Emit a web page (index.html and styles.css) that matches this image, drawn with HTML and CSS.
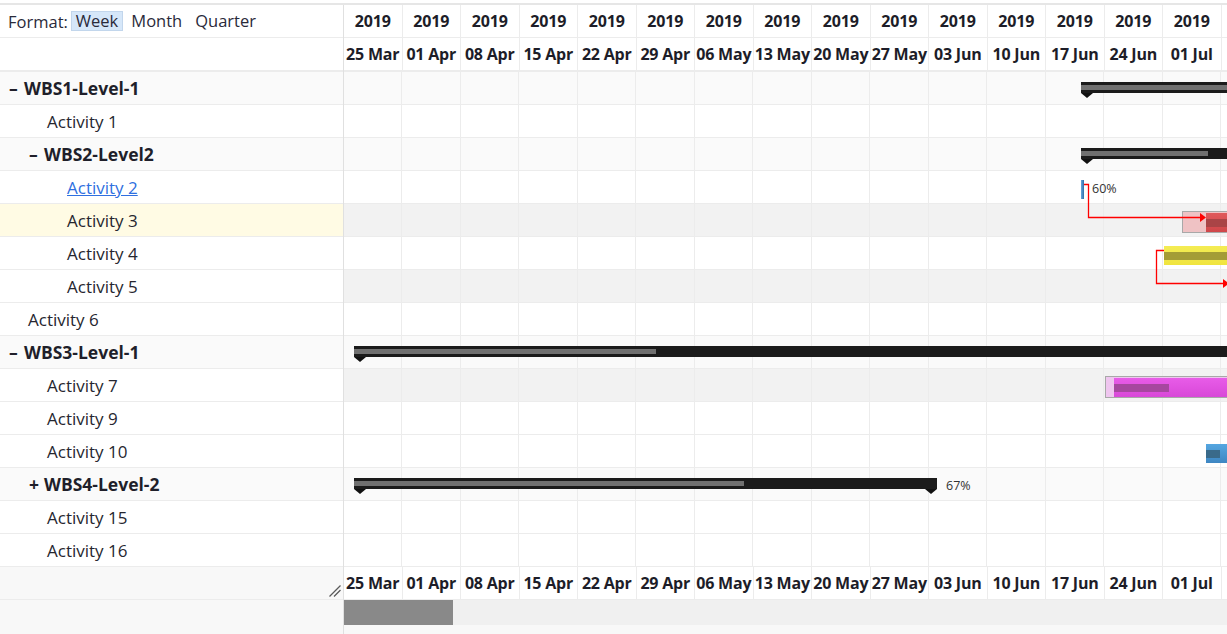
FILE: index.html
```html
<!DOCTYPE html>
<html>
<head>
<meta charset="utf-8">
<link rel="stylesheet" href="styles.css">
</head>
<body>
<div class="gantt">
  <div class="grid">
    <div class="hrow1"><span class="lbl">Format:</span><span class="fmt on">Week</span><span class="fmt">Month</span><span class="fmt">Quarter</span></div>
    <div class="hrow2"></div>
    <div class="row sum p9"><b><span class="tog">–</span>WBS1-Level-1</b></div>
    <div class="row p47">Activity 1</div>
    <div class="row sum p29"><b><span class="tog">–</span>WBS2-Level2</b></div>
    <div class="row p67"><a class="link" href="#">Activity 2</a></div>
    <div class="row sel p67">Activity 3</div>
    <div class="row p67">Activity 4</div>
    <div class="row p67">Activity 5</div>
    <div class="row p28">Activity 6</div>
    <div class="row sum p9"><b><span class="tog">–</span>WBS3-Level-1</b></div>
    <div class="row p47">Activity 7</div>
    <div class="row p47">Activity 9</div>
    <div class="row p47">Activity 10</div>
    <div class="row sum p29"><b><span class="tog">+</span>WBS4-Level-2</b></div>
    <div class="row p47">Activity 15</div>
    <div class="row p47">Activity 16</div>
    <div class="frow">
      <svg class="grip" width="14" height="14" viewBox="0 0 14 14"><path d="M1.5 12.5 L12.5 1.5 M6 12.5 L12.5 6" stroke="#5a5a5a" stroke-width="1.3" fill="none"/></svg>
    </div>
    <div class="srow"></div>
  </div>
  <div class="chart">
    <div class="hrow1 cells">
      <div class="cell">2019</div><div class="cell">2019</div><div class="cell">2019</div><div class="cell">2019</div><div class="cell">2019</div><div class="cell">2019</div><div class="cell">2019</div><div class="cell">2019</div><div class="cell">2019</div><div class="cell">2019</div><div class="cell">2019</div><div class="cell">2019</div><div class="cell">2019</div><div class="cell">2019</div><div class="cell">2019</div><div class="cell"></div>
    </div>
    <div class="hrow2 cells">
      <div class="cell">25 Mar</div><div class="cell">01 Apr</div><div class="cell">08 Apr</div><div class="cell">15 Apr</div><div class="cell">22 Apr</div><div class="cell">29 Apr</div><div class="cell">06 May</div><div class="cell">13 May</div><div class="cell">20 May</div><div class="cell">27 May</div><div class="cell">03 Jun</div><div class="cell">10 Jun</div><div class="cell">17 Jun</div><div class="cell">24 Jun</div><div class="cell">01 Jul</div><div class="cell"></div>
    </div>
    <div class="body">
      <div class="vlines"></div>
      <div class="row sum">
        <div class="sbar" style="left:737px;width:400px"><div class="sprog" style="width:400px"></div><span class="tri l"></span></div>
      </div>
      <div class="row"></div>
      <div class="row sum">
        <div class="sbar" style="left:737px;width:400px"><div class="sprog" style="width:127px"></div><span class="tri l"></span></div>
      </div>
      <div class="row">
        <div class="mark" style="left:737px"></div><span class="pct" style="left:748px">60%</span>
      </div>
      <div class="row grey">
        <div class="box red" style="left:838px"></div>
        <div class="bar red" style="left:862px"><div class="strip" style="width:60px"></div></div>
      </div>
      <div class="row">
        <div class="bar yellow" style="left:820px"><div class="strip" style="width:60px"></div></div>
      </div>
      <div class="row grey"></div>
      <div class="row"></div>
      <div class="row sum">
        <div class="sbar" style="left:10px;width:1000px"><div class="sprog" style="width:302px"></div><span class="tri l"></span></div>
      </div>
      <div class="row grey">
        <div class="box pink" style="left:761px"></div>
        <div class="bar magenta" style="left:770px"><div class="strip" style="width:55px"></div></div>
      </div>
      <div class="row"></div>
      <div class="row">
        <div class="bar blue" style="left:862px"><div class="strip" style="width:14px"></div></div>
      </div>
      <div class="row sum">
        <div class="sbar" style="left:10px;width:583px"><div class="sprog" style="width:390px"></div><span class="tri l"></span><span class="tri r"></span></div>
        <span class="pct" style="left:602px">67%</span>
      </div>
      <div class="row"></div>
      <div class="row"></div>
      <svg class="links" width="883" height="495">
        <path d="M740 112.5 H744.5 V145.5 H857" stroke="#f00" stroke-width="1.3" fill="none"/>
        <polygon points="856,141 862,145.5 856,150" fill="#f00"/>
        <path d="M820 178.5 H812.5 V211.5 H880" stroke="#f00" stroke-width="1.3" fill="none"/>
        <polygon points="879,207 885,211.5 879,216" fill="#f00"/>
      </svg>
    </div>
    <div class="frow cells">
      <div class="cell">25 Mar</div><div class="cell">01 Apr</div><div class="cell">08 Apr</div><div class="cell">15 Apr</div><div class="cell">22 Apr</div><div class="cell">29 Apr</div><div class="cell">06 May</div><div class="cell">13 May</div><div class="cell">20 May</div><div class="cell">27 May</div><div class="cell">03 Jun</div><div class="cell">10 Jun</div><div class="cell">17 Jun</div><div class="cell">24 Jun</div><div class="cell">01 Jul</div><div class="cell"></div>
    </div>
    <div class="srow">
      <div class="track"><div class="thumb"></div></div>
    </div>
  </div>
</div>
</body>
</html>
```
FILE: styles.css
```css
html, body {
  margin: 0;
  background: #fff;
}
body {
  padding-top: 3px;
  font-family: "Open Sans", "Noto Sans", sans-serif;
  font-size: 16px;
  color: #222;
  overflow: hidden;
  height: 634px;
  box-sizing: border-box;
}
.gantt {
  display: flex;
  border-top: 2px solid #e6e6e6;
}
.grid {
  width: 344px;
  flex: none;
  border-right: 1px solid #e0e0e0;
  box-sizing: border-box;
}
.chart {
  flex: 1;
  min-width: 0;
  overflow: hidden;
}
.hrow1 {
  height: 33px;
  box-sizing: border-box;
  border-bottom: 1px solid #ececec;
  display: flex;
  align-items: center;
}
.hrow2 {
  height: 34px;
  box-sizing: border-box;
  border-bottom: 2px solid #ececec;
  display: flex;
  align-items: center;
}
.grid .hrow1 {
  padding-left: 8px;
  font-size: 16.5px;
  color: #2a2a3a;
}
.lbl {
  margin-right: 3px;
}
.fmt {
  padding: 0 4px;
  margin-right: 3px;
  line-height: 18px;
  border: 1px solid transparent;
}
.fmt.on {
  background: #d6e7f9;
  border-color: #c2d6ec;
}
.row {
  height: 33px;
  box-sizing: border-box;
  border-bottom: 1px solid #ececec;
  display: flex;
  align-items: center;
  position: relative;
  background: #fff;
  white-space: nowrap;
}
.grid .row {
  font-size: 17px;
  color: #26262f;
  padding-top: 1px;
}
.grid .row.sum {
  padding-top: 0;
  padding-bottom: 1px;
}
.row.sum {
  background: #fafafa;
}
.grid .row.sel {
  background: #fffbe4;
}
.chart .row.grey,
.chart .row.sel {
  background: #f2f2f2;
}
.grid .row b {
  font-weight: 700;
  font-size: 17.5px;
  color: #1f1f2a;
}
.tog {
  display: inline-block;
  width: 15px;
}
.p9 { padding-left: 9px; }
.p28 { padding-left: 28px; }
.p29 { padding-left: 29px; }
.p47 { padding-left: 47px; }
.p67 { padding-left: 67px; }
.link {
  color: #2f6fe0;
  text-decoration: underline;
}
.frow {
  height: 33px;
  box-sizing: border-box;
  border-bottom: 1px solid #ececec;
  display: flex;
  align-items: center;
}
.grid .frow {
  background: #f8f8f8;
  justify-content: flex-end;
  align-items: flex-end;
  padding: 0 1px 1px 0;
}
.srow {
  height: 35px;
  background: #f8f8f8;
}
.cells {
  display: flex;
  align-items: stretch;
  background: #fff;
}
.cell {
  flex: 0 0 58.5px;
  box-sizing: border-box;
  border-right: 1px solid #ececec;
  display: flex;
  align-items: center;
  justify-content: center;
  font-weight: 700;
  font-size: 16px;
  color: #1d1d28;
  white-space: nowrap;
  letter-spacing: -0.2px;
}
.body {
  position: relative;
}
.vlines {
  position: absolute;
  inset: 0;
  background: repeating-linear-gradient(to right, transparent 0 57.5px, #ececec 57.5px 58.5px);
  z-index: 1;
  pointer-events: none;
}
.links {
  position: absolute;
  left: 0;
  top: 0;
  z-index: 3;
}
.sbar {
  position: absolute;
  top: 10px;
  height: 11px;
  background: #1b1b1b;
  z-index: 2;
}
.sprog {
  position: absolute;
  left: 0;
  top: 3px;
  height: 4.7px;
  background: #707070;
}
.tri {
  position: absolute;
  top: 11px;
  width: 0;
  height: 0;
  border-left: 6px solid transparent;
  border-right: 6px solid transparent;
  border-top: 5px solid #111;
}
.tri.l { left: 0; }
.tri.r { right: 0; }
.mark {
  position: absolute;
  top: 9px;
  width: 2.5px;
  height: 19px;
  background: linear-gradient(to right, #6aa6dd, #2f6fa8);
  z-index: 2;
}
.pct {
  position: absolute;
  top: 10px;
  font-size: 12.5px;
  color: #333;
  z-index: 2;
  line-height: 16px;
}
.box {
  position: absolute;
  top: 7px;
  height: 22px;
  width: 400px;
  box-sizing: border-box;
  border: 1px solid #a8a8a8;
  z-index: 2;
}
.box.red { background: #efc2c4; }
.box.pink { background: #efc6ef; }
.bar {
  position: absolute;
  top: 9px;
  height: 19px;
  width: 400px;
  z-index: 2;
}
.strip {
  position: absolute;
  left: 0;
  top: 6px;
  height: 7.5px;
}
.bar.red { background: linear-gradient(#e0595b, #cf474a); }
.bar.red .strip { background: #a94446; width: 400px !important; top: 6px; height: 8px; }
.bar.yellow { background: linear-gradient(#f4ec54, #f0e43e); }
.bar.yellow .strip { background: #a49c36; width: 400px !important; }
.bar.magenta { background: linear-gradient(#e85ce8, #d848d8); }
.bar.magenta .strip { background: #a6479f; }
.bar.blue { background: linear-gradient(#55a6e0, #3e86c2); }
.bar.blue .strip { background: #3a6a8a; }
.track {
  height: 25px;
  background: #f0f0f0;
}
.thumb {
  width: 109px;
  height: 25px;
  background: #898989;
}
```
